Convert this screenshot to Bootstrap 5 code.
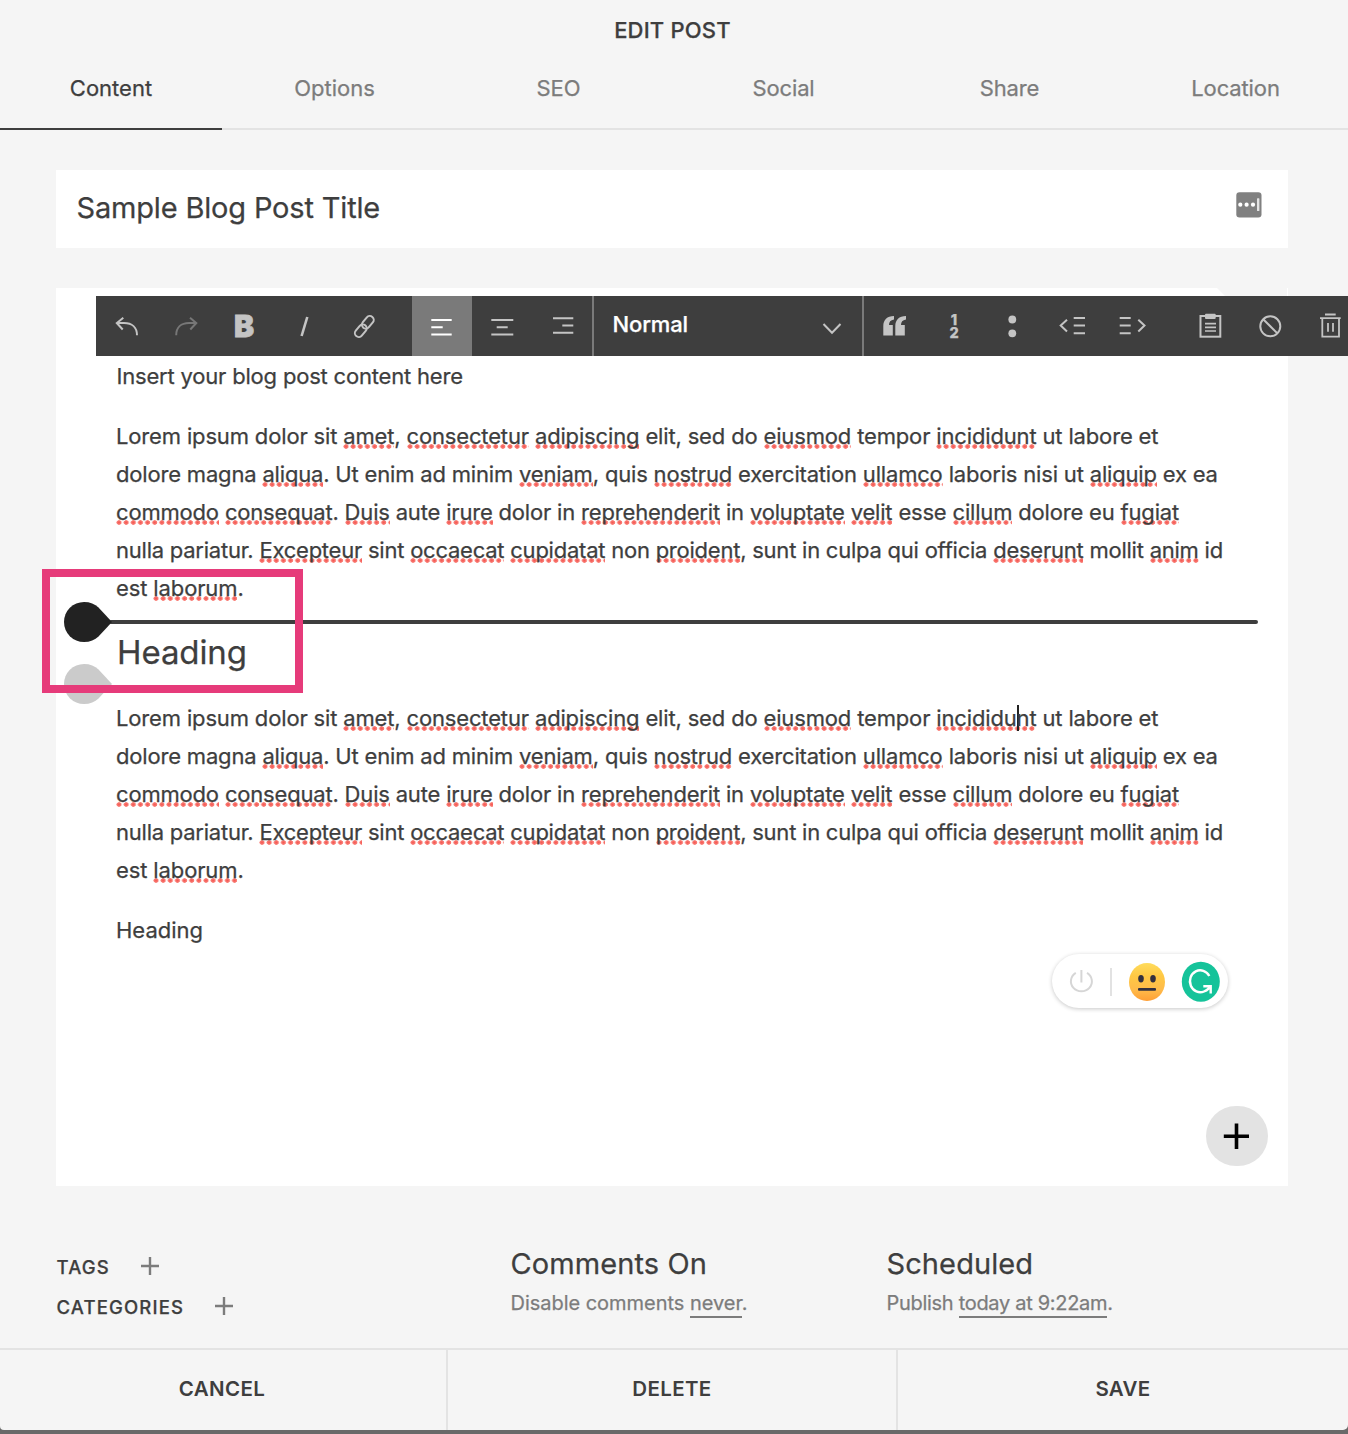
<!DOCTYPE html>
<html lang="en">
<head>
<meta charset="utf-8">
<meta name="viewport" content="width=device-width, initial-scale=1">
<title>Edit Post</title>
<link href="https://cdn.jsdelivr.net/npm/bootstrap@5.3.0/dist/css/bootstrap.min.css" rel="stylesheet">
<script src="https://cdn.jsdelivr.net/npm/bootstrap@5.3.0/dist/js/bootstrap.bundle.min.js" defer></script>
<style>
body{font-family:Inter,"Liberation Sans",sans-serif;font-size:22px;color:#3e3e3e;background:#696969;overflow:hidden;-webkit-text-stroke:.25px currentColor}
.dialog-shell{width:1348px;height:1430px;background:#f5f5f5;border-radius:0 0 5px 4px;overflow:hidden}
.dialog-title{height:60px;font-size:22px;font-weight:500;letter-spacing:.2px;line-height:60px;padding-right:3px}
.post-tabs{height:70px;flex-wrap:nowrap;border-bottom:2px solid #e3e3e3}
.post-tabs .nav-item{flex:0 0 225px}
.post-tabs .nav-item:first-child{flex-basis:222px}
.post-tabs .nav-item:nth-child(3){flex-basis:223px}
.post-tabs .nav-item:nth-child(n+4){flex-basis:226px}
.post-tabs .nav-item:nth-child(n+4) .nav-link{letter-spacing:-.12px;padding-left:1px}
.post-tabs .nav-link{height:70px;line-height:57px;padding:0;color:#7c7c7c;border-bottom:2px solid transparent}
.post-tabs .nav-link.active{color:#3e3e3e;border-color:#3e3e3e}
.title-field{margin:40px 60px 0 56px;height:78px;padding:0 26.500px 0 20.500px;font-size:29px;letter-spacing:-.17px}
.title-field span{margin-top:-3px}
.title-field svg{margin-top:-9px}
.editor{margin:40px 60px 0 56px;height:898px;padding-top:8px}
.notch{top:0;right:1px;width:70px;height:8px;background:#f5f5f5;clip-path:polygon(0 0,100% 0,100% 100%,8px 100%)}
.toolbar{margin-left:40px;width:1252px;height:60px;background:#3e3e3e;overflow:hidden;position:relative}
.tool{flex:0 0 60px;width:60px;height:60px;padding:0;border:0;border-radius:0;color:#c4c4c4;background:none;line-height:1}
.tool svg{display:block;fill:none;stroke:currentColor;stroke-width:2}
.tool.dim{color:#777}
.tool.on{background:#7a7a7a;color:#fff}
.tool-gap{flex:0 0 16px}
.bold-mark{font:900 30px/60px Inter,sans-serif;-webkit-text-stroke:.8px #c4c4c4;padding-right:4px}
.digit-mark{font:800 14.500px/13px Inter,sans-serif;padding-bottom:1px}
.style-select{flex:0 0 272px;height:60px;border:solid #7a7a7a;border-width:0 2px;color:#fff;font-weight:500;letter-spacing:-.15px;padding:0 20px 3px 18.500px}
.style-select svg{margin-top:8px}
.copy{padding:1px 0 0 60px;line-height:38px;white-space:nowrap}
.copy p{margin:0 0 22px}
.copy p span{display:block}
.copy p.intro{letter-spacing:-.19px;padding-left:.5px}
.l1{letter-spacing:-.155px}.l2{letter-spacing:-.18px}.l3{letter-spacing:-.185px}.l4{letter-spacing:-.235px}.l5{letter-spacing:-.12px}
.copy u{text-decoration:none;padding:2px 0 0;background:radial-gradient(ellipse 2.900px 2.700px at 3px 2.700px,#f4544e 0,#f9817a 80%,transparent 100%) 0 100%/7.150px 5.400px repeat-x}
.copy h2{font-size:33px;font-weight:400;letter-spacing:-.1px;line-height:40px;margin:0 0 27px;padding-left:1px}
.drop-line{height:4px;margin:13px 30px 8px -7px;background:#3e3e3e;border-radius:2px;position:relative}
.copy p.before-drop{margin-bottom:0}
.pin{left:-45px;top:-18px}
.pin.ghost{top:44px}
.frame-mark{left:-67px;top:-51px;width:261px;height:124px;border:8px solid #e63b7a}
.caret{display:inline-block;width:2px;height:26px;margin:0 -2px 0 0;background:#222;vertical-align:-5px}
.assist{right:60px;top:666px;width:176px;height:54px;border-radius:27px;box-shadow:0 1px 4px rgba(0,0,0,.22)}
.add-block{right:20px;bottom:20px;width:62px;height:60px;border:0;border-radius:30px;background:#e3e3e3}
.meta-row{height:162px;padding-top:61px}
.meta-left{width:454px;margin-left:56.500px}
.meta-label{height:40px;font-size:18.500px;font-weight:500;letter-spacing:1.150px}
.meta-label span{margin-top:2px}
.meta-label svg{margin-top:-3px}
.tag-gap{margin-left:31.500px}
.cat-gap{margin-left:31px}
.meta-head{font-size:29px;line-height:34px;margin:0;font-weight:400;letter-spacing:.1px}
.meta-sub{font-size:20px;color:#7c7c7c;line-height:26px;margin-top:9px;letter-spacing:-.03px}
.meta-sub.when{letter-spacing:-.3px}
.meta-sub a{color:inherit;text-decoration:none;border-bottom:2px solid #7c7c7c;padding-bottom:1px}
.foot{height:82px;border-top:2px solid #e3e3e3}
.foot .btn{border:0;border-radius:0;font-size:20.500px;font-weight:600;letter-spacing:.35px;color:#3e3e3e;padding:0 0 1px;flex:1 1 0;-webkit-text-stroke:0}
.foot .btn:first-child{flex:0 0 448px;padding-right:2px}
.foot .btn:nth-child(2){flex:0 0 450px}
.foot .btn:not(:last-child){border-right:2px solid #e3e3e3}
</style>
</head>
<body>
<div class="dialog-shell d-flex flex-column">
  <div class="dialog-title text-center">EDIT POST</div>
  <ul class="nav post-tabs text-center">
    <li class="nav-item"><a class="nav-link active" href="#">Content</a></li>
    <li class="nav-item"><a class="nav-link" href="#">Options</a></li>
    <li class="nav-item"><a class="nav-link" href="#">SEO</a></li>
    <li class="nav-item"><a class="nav-link" href="#">Social</a></li>
    <li class="nav-item"><a class="nav-link" href="#">Share</a></li>
    <li class="nav-item"><a class="nav-link" href="#">Location</a></li>
  </ul>

  <div class="title-field bg-white d-flex align-items-center justify-content-between flex-shrink-0">
    <span>Sample Blog Post Title</span>
    <svg width="26" height="26" viewBox="0 0 26 26"><rect x=".3" y=".3" width="25.2" height="25.2" rx="3.2" fill="#808080"/><g fill="#fff"><circle cx="4.3" cy="12.7" r="2.1"/><circle cx="10.6" cy="12.7" r="2.1"/><circle cx="17" cy="12.7" r="2.1"/></g><rect x="21" y="6.3" width="2.4" height="12.8" rx=".6" fill="#e4e4e4"/></svg>
  </div>

  <div class="editor bg-white position-relative flex-shrink-0">
    <div class="notch position-absolute"></div>
    <div class="toolbar d-flex">
      <button class="tool btn"><svg width="60" height="60"><path d="M27.3 21.7L20.8 27L26.7 33.5M21 27H28C36 27 41 31.500 41 39.300"/></svg></button>
      <button class="tool btn dim"><svg width="60" height="60"><path d="M34 21.700L40.300 27L34.300 33.500M40 27H33C25 27 20.200 31.500 20.200 39.300"/></svg></button>
      <button class="tool btn bold-mark">B</button>
      <button class="tool btn"><svg width="60" height="60"><path d="M31.300 21L25.600 40" stroke-width="2.600"/></svg></button>
      <button class="tool btn"><svg width="60" height="60"><g transform="rotate(-50 28.300 30.500)"><rect x="26.800" y="26.600" width="14" height="7.800" rx="3.900"/><rect x="15.800" y="26.600" width="14" height="7.800" rx="3.900"/></g></svg></button>
      <div class="tool-gap"></div>
      <button class="tool btn on"><svg width="60" height="60"><path d="M19.300 24H39.700M19.300 31.300H30.700M19.300 38.500H39.700"/></svg></button>
      <button class="tool btn"><svg width="60" height="60"><path d="M19.300 24H41.300M24.700 31.300H35.700M19.300 38.600H41.300"/></svg></button>
      <button class="tool btn"><svg width="60" height="60"><path d="M21 22.300H41.300M30.300 29.500H41.300M21 36.700H41.300"/></svg></button>
      <div class="style-select d-flex align-items-center justify-content-between">
        <span>Normal</span>
        <svg width="20" height="14" viewBox="0 0 20 14"><path d="M1.500 2L10 10.700L18.500 2" fill="none" stroke="#c4c4c4" stroke-width="2"/></svg>
      </div>
      <button class="tool btn"><svg width="60" height="60"><path d="M19.300 39.500V30C19.300 24 23 20 30 20V23.500C26.500 24 25 26 25 29H28.800V39.500ZM31.300 39.500V30C31.300 24 35 20 42 20V23.500C38.500 24 37 26 37 29H40.800V39.500Z" fill="currentColor" stroke="none"/></svg></button>
      <button class="tool btn digit-mark">1<br>2</button>
      <button class="tool btn"><svg width="60" height="60"><g fill="currentColor" stroke="none"><circle cx="28.300" cy="23.500" r="3.900"/><circle cx="28.300" cy="37.300" r="3.900"/></g></svg></button>
      <button class="tool btn"><svg width="60" height="60"><path d="M23 23.700L16.700 29.500L23 35.500M29.700 22H41M29.700 29.500H41M29.700 37.200H41"/></svg></button>
      <button class="tool btn"><svg width="60" height="60"><path d="M34.300 23.700L40.500 29.500L34.300 35.500M15.700 22H26.700M15.700 29.500H26.700M15.700 37.200H26.700"/></svg></button>
      <div class="tool-gap"></div>
      <button class="tool btn"><svg width="60" height="60"><rect x="20.500" y="20" width="19.800" height="20.700"/><rect x="25" y="17.700" width="10.700" height="5.300" rx="1" fill="currentColor" stroke="none"/><path d="M25 27.700H36M25 31.300H36M25 35H36" stroke-width="1.700"/></svg></button>
      <button class="tool btn"><svg width="60" height="60"><circle cx="30.300" cy="30.300" r="10"/><path d="M23.200 23.200L37.400 37.400"/></svg></button>
      <button class="tool btn"><svg width="60" height="60"><path d="M20 22.200H40.700M25 18.500H35.700M22.300 22V40.700H39V22M28 27V35.700M33 27V35.700" stroke-width="1.800"/></svg></button>
    </div>

    <div class="copy">
      <p class="intro">Insert your blog post content here</p>
      <p class="before-drop">
        <span class="l1">Lorem ipsum dolor sit <u>amet</u>, <u>consectetur</u> <u>adipiscing</u> elit, sed do <u>eiusmod</u> tempor <u>incididunt</u> ut labore et</span>
        <span class="l2">dolore magna <u>aliqua</u>. Ut enim ad minim <u>veniam</u>, quis <u>nostrud</u> exercitation <u>ullamco</u> laboris nisi ut <u>aliquip</u> ex ea</span>
        <span class="l3"><u>commodo</u> <u>consequat</u>. <u>Duis</u> aute <u>irure</u> dolor in <u>reprehenderit</u> in <u>voluptate</u> <u>velit</u> esse <u>cillum</u> dolore eu <u>fugiat</u></span>
        <span class="l4">nulla pariatur. <u>Excepteur</u> sint <u>occaecat</u> <u>cupidatat</u> non <u>proident</u>, sunt in culpa qui officia <u>deserunt</u> mollit <u>anim</u> id</span>
        <span class="l5">est <u>laborum</u>.</span>
      </p>
      <div class="drop-line">
        <svg class="pin position-absolute" width="50" height="40" viewBox="0 0 50 40"><path d="M20 0A20 20 0 1 0 20 40C26 40 31 38 34.500 34.500L48 20L34.500 5.500C31 2 26 0 20 0Z" fill="#222"/></svg>
        <svg class="pin ghost position-absolute" width="50" height="40" viewBox="0 0 50 40"><path d="M20 0A20 20 0 1 0 20 40C26 40 31 38 34.500 34.500L48 20L34.500 5.500C31 2 26 0 20 0Z" fill="#cbcbcb"/></svg>
        <div class="frame-mark position-absolute"></div>
      </div>
      <h2>Heading</h2>
      <p>
        <span class="l1">Lorem ipsum dolor sit <u>amet</u>, <u>consectetur</u> <u>adipiscing</u> elit, sed do <u>eiusmod</u> tempor <u>incididu<i class="caret"></i>nt</u> ut labore et</span>
        <span class="l2">dolore magna <u>aliqua</u>. Ut enim ad minim <u>veniam</u>, quis <u>nostrud</u> exercitation <u>ullamco</u> laboris nisi ut <u>aliquip</u> ex ea</span>
        <span class="l3"><u>commodo</u> <u>consequat</u>. <u>Duis</u> aute <u>irure</u> dolor in <u>reprehenderit</u> in <u>voluptate</u> <u>velit</u> esse <u>cillum</u> dolore eu <u>fugiat</u></span>
        <span class="l4">nulla pariatur. <u>Excepteur</u> sint <u>occaecat</u> <u>cupidatat</u> non <u>proident</u>, sunt in culpa qui officia <u>deserunt</u> mollit <u>anim</u> id</span>
        <span class="l5">est <u>laborum</u>.</span>
      </p>
      <p>Heading</p>
    </div>

    <div class="assist bg-white position-absolute">
      <svg class="d-block" width="176" height="54" viewBox="1 0 176 54">
        <defs><linearGradient id="face" x1="0" y1="0" x2="0" y2="1"><stop offset="0" stop-color="#ffdc5c"/><stop offset=".35" stop-color="#ffc843"/><stop offset=".7" stop-color="#ffbb4a"/><stop offset="1" stop-color="#ff9f35"/></linearGradient></defs>
        <g fill="none" stroke="#d6d6d6" stroke-width="2"><path d="M24.800 18.900A10.500 10 0 1 0 36 18.900M30.400 16V28.500"/><path d="M60 14V42" stroke="#e2e2e2"/></g>
        <ellipse cx="96" cy="28" rx="18" ry="19" fill="url(#face)"/>
        <g fill="#33303e"><ellipse cx="90" cy="24.700" rx="2.800" ry="3.700"/><ellipse cx="102" cy="24.700" rx="2.800" ry="3.700"/><rect x="87" y="34" width="18" height="2.700" rx="1"/></g>
        <ellipse cx="149.800" cy="27.700" rx="19" ry="20" fill="#15c39a"/>
        <path d="M158.300 22A10.300 11 0 1 0 153 37.500C156.500 36 158.500 34.500 159.500 31.500M152.300 32.200H159.700V39.500" fill="none" stroke="#fff" stroke-width="2.400"/>
      </svg>
    </div>
    <button class="add-block position-absolute p-0" aria-label="Add block"><svg class="d-block" width="62" height="60"><path d="M17.800 30.300H43M30.500 17.500V43" stroke="#000" stroke-width="3.600"/></svg></button>
  </div>

  <div class="meta-row d-flex flex-shrink-0">
    <div class="meta-left">
      <div class="meta-label d-flex align-items-center"><span>TAGS</span><svg class="tag-gap" width="18" height="18"><path d="M0 9H18M9 0V18" stroke="#7c7c7c" stroke-width="2.400"/></svg></div>
      <div class="meta-label d-flex align-items-center"><span>CATEGORIES</span><svg class="cat-gap" width="18" height="18"><path d="M0 9H18M9 0V18" stroke="#7c7c7c" stroke-width="2.400"/></svg></div>
    </div>
    <div style="width:376px"><h3 class="meta-head">Comments On</h3><div class="meta-sub">Disable comments <a href="#">never</a>.</div></div>
    <div><h3 class="meta-head">Scheduled</h3><div class="meta-sub when">Publish <a href="#">today at 9:22am</a>.</div></div>
  </div>

  <div class="foot d-flex flex-shrink-0">
    <button class="btn">CANCEL</button>
    <button class="btn">DELETE</button>
    <button class="btn">SAVE</button>
  </div>
</div>
</body>
</html>
